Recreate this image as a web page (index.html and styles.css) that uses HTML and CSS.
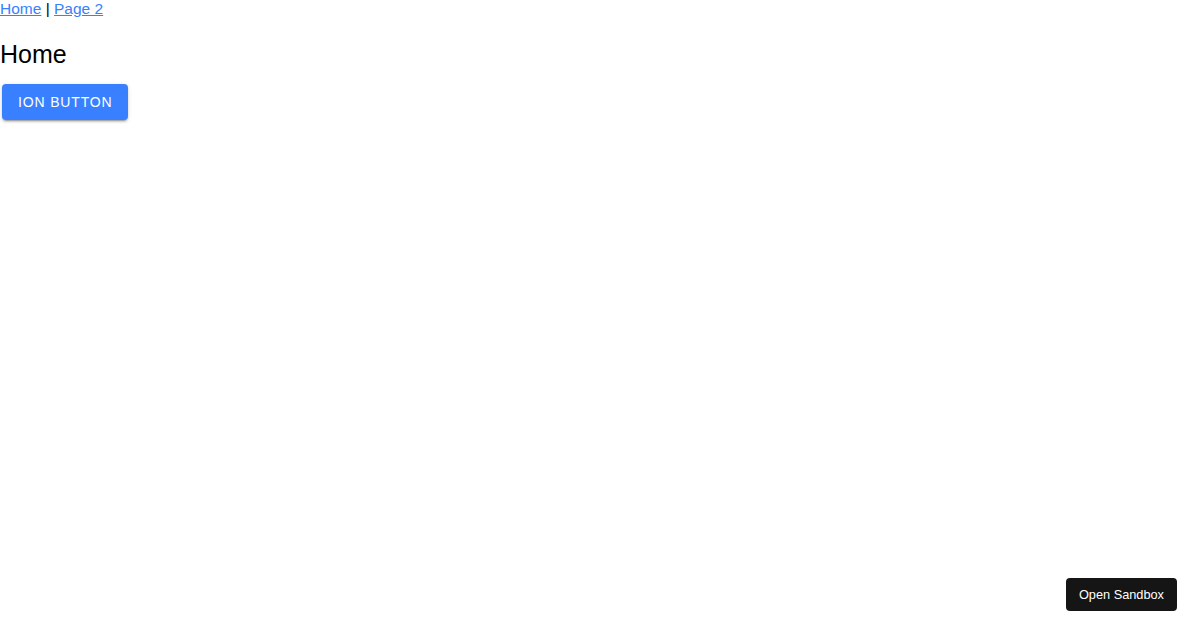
FILE: index.html
```html
<!DOCTYPE html>
<html>
<head>
<meta charset="utf-8">
<link rel="stylesheet" href="styles.css">
</head>
<body>
<nav class="nav"><a href="#">Home</a> | <a href="#">Page 2</a></nav>
<h1 class="title">Home</h1>
<button class="ion-button">Ion Button</button>
<a class="sandbox" href="#">Open Sandbox</a>
</body>
</html>
```
FILE: styles.css
```css
html, body {
  margin: 0;
  padding: 0;
  background: #fff;
}
body {
  font-family: "Liberation Sans", Arial, sans-serif;
  font-size: 16px;
  color: #000;
}
.nav {
  font-size: 15.5px;
  line-height: 18px;
}
.nav a {
  color: #3880ff;
  text-decoration: underline;
}
.title {
  font-size: 25px;
  font-weight: 400;
  line-height: 30px;
  margin: 21px 0 15px;
}
.ion-button {
  display: block;
  margin: 4px 2px;
  height: 36px;
  padding: 0 16px;
  border: 0;
  border-radius: 4px;
  background: #3880ff;
  color: #fff;
  font-family: "Liberation Sans", Arial, sans-serif;
  font-size: 14px;
  font-weight: 400;
  letter-spacing: 0.06em;
  text-transform: uppercase;
  box-shadow: 0 3px 1px -2px rgba(0,0,0,0.2), 0 2px 2px 0 rgba(0,0,0,0.14), 0 1px 5px 0 rgba(0,0,0,0.12);
}
.sandbox {
  position: fixed;
  right: 23px;
  bottom: 19px;
  height: 33px;
  box-sizing: border-box;
  padding: 0 13px;
  display: flex;
  align-items: center;
  background: #151515;
  color: #fff;
  border-radius: 4px;
  font-family: "Liberation Sans", Arial, sans-serif;
  font-size: 12.75px;
  text-decoration: none;
}
```
